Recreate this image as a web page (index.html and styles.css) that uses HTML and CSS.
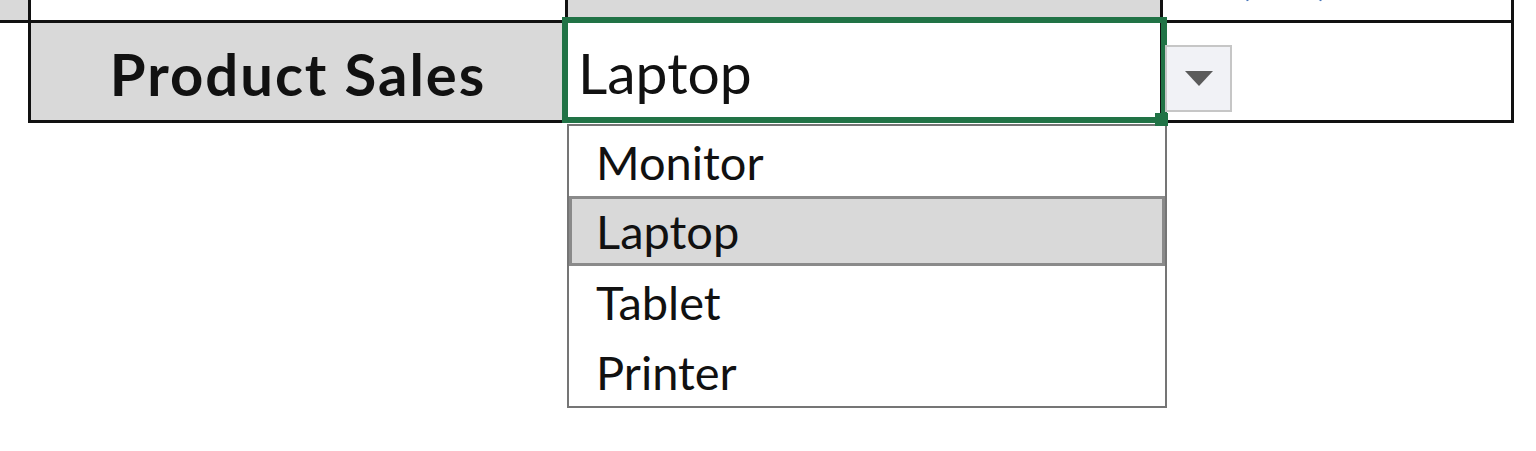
FILE: index.html
```html
<!DOCTYPE html>
<html lang="en">
<head>
    <meta charset="UTF-8">
    <meta name="viewport" content="width=device-width, initial-scale=1.0">
    <title>Product Sales dropdown</title>
    <link rel="stylesheet" href="styles.css">
</head>
<body>
    <div class="sheet">
        <!-- row above, mostly scrolled out of view -->
        <div class="cell gray"></div>
        <div class="cell"></div>
        <div class="cell gray"></div>
        <div class="cell cut-cell"><span class="cut">($)</span></div>

        <div class="cell blank"></div>
        <div class="cell gray label">Product Sales</div>
        <div class="cell active">
            <span class="value">Laptop</span>
            <span class="selection"></span>
            <span class="handle"></span>
            <button class="dd-btn" type="button">
                <svg width="28" height="16" viewBox="0 0 28 16"><polygon points="0,0 28,0 14,15" fill="#5b5b5b"/></svg>
            </button>
        </div>
        <div class="cell"></div>

        <!-- open validation list under the active cell -->
        <ul class="dd-list">
            <li>Monitor</li>
            <li class="current">Laptop</li>
            <li>Tablet</li>
            <li>Printer</li>
        </ul>
    </div>
</body>
</html>
```

FILE: styles.css
```css
body {
    margin: 0;
    background: #fff;
    color: #111;
    font-family: 'Lato', 'Liberation Sans', sans-serif;
}

.sheet {
    display: grid;
    grid-template-columns: 31px 537px 595px 351px;
    grid-template-rows: 23px 100px auto;
}

.cell {
    position: relative;
    box-sizing: border-box;
    border-right: 3px solid #111;
    border-bottom: 3px solid #111;
}

.gray {
    background: #d9d9d9;
}

.blank {
    border-bottom: none;
}

.cut-cell {
    display: flex;
    justify-content: center;
    align-items: flex-end;
    overflow: hidden;
}

.cut {
    display: block;
    margin-bottom: 20px;
    margin-left: -90px;
    font-size: 56px;
    line-height: 56px;
    letter-spacing: 16px;
    color: #3b6cb5;
}

.label {
    display: flex;
    align-items: center;
    justify-content: center;
    padding-top: 4px;
    font-size: 58px;
    font-weight: 700;
    letter-spacing: 2px;
    line-height: 93px;
}

.active {
    z-index: 2;
    display: flex;
    align-items: center;
    padding: 2px 0 0 10px;
    font-size: 57px;
    line-height: 95px;
}

.selection {
    position: absolute;
    top: -6px;
    left: -6px;
    right: -7px;
    bottom: -3px;
    border: 6px solid #217346;
}

.handle {
    position: absolute;
    right: -8px;
    bottom: -6px;
    width: 13px;
    height: 13px;
    background: #217346;
}

.dd-btn {
    position: absolute;
    left: calc(100% + 5px);
    top: 22px;
    width: 67px;
    height: 67px;
    box-sizing: border-box;
    padding: 0;
    border: 2px solid #c6c6c6;
    background: #f1f2f6;
    display: flex;
    align-items: center;
    justify-content: center;
}

.dd-list {
    grid-column: 3 / 5;
    grid-row: 3;
    width: 600px;
    margin: 1px 0 0 -1px;
    padding: 0;
    list-style: none;
    box-sizing: border-box;
    border: 2px solid #757575;
    background: #fff;
    font-size: 47px;
}

.dd-list li {
    box-sizing: border-box;
    height: 70px;
    padding: 2px 0 0 27px;
    line-height: 68px;
}

.dd-list li.current {
    background: #d9d9d9;
    border: 3px solid #8a8a8a;
    padding: 0 0 0 24px;
    line-height: 64px;
}
```
